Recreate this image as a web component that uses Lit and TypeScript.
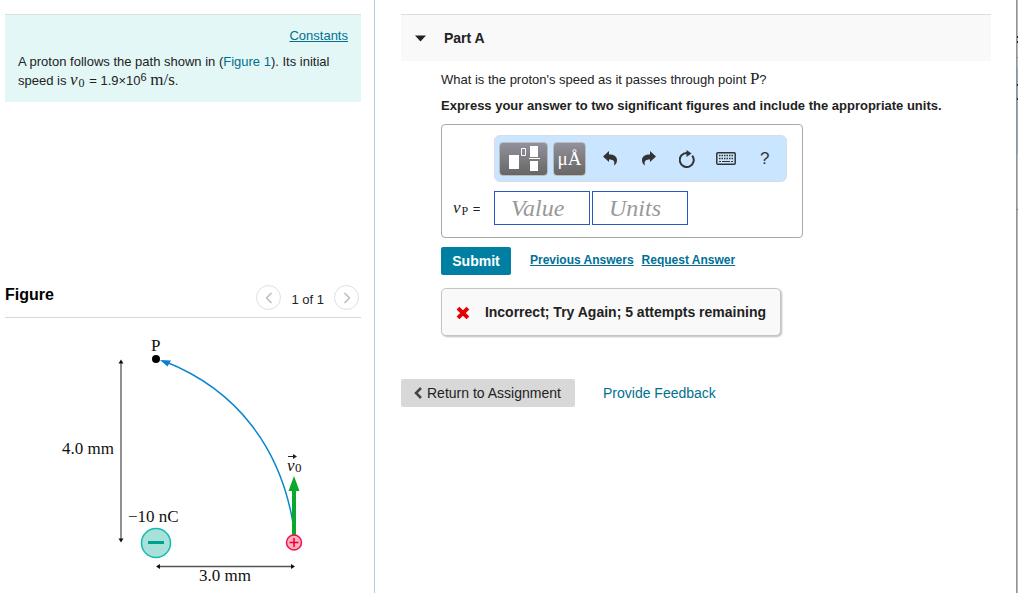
import { LitElement, html, css, svg } from "lit";
import { customElement, state } from "lit/decorators.js";

const FIGURE = svg`
  <g fill="none" stroke="#555" stroke-width="1.300">
    <path d="M116 37V213" />
    <path d="M155 240.500H286" />
  </g>
  <g fill="#111">
    <path d="M116 33.500l2.500 4h-5z" />
    <path d="M116 216.500l2.500 -4h-5z" />
    <path d="M151 240.500l4 -2.500v5z" />
    <path d="M290 240.500l-4 -2.500v5z" />
    <circle cx="151" cy="33" r="4" fill="#000" />
  </g>
  <path d="M160 35.500C232 64 276 122 288.500 200" fill="none" stroke="#0a85d1" stroke-width="1.500" />
  <path d="M155 34l11 0.500l-3.500 6z" fill="#0a7fcf" />
  <path d="M289 210V160" stroke="#0aa82c" stroke-width="4" />
  <path d="M289 150l5.500 15h-11z" fill="#0aa82c" />
  <circle cx="289" cy="216.500" r="7.500" fill="#ffb0b8" stroke="#ee1155" stroke-width="1.500" />
  <path d="M284.500 216.500h9M289 212v9" stroke="#e8003c" stroke-width="1.500" />
  <circle cx="151" cy="217" r="14.500" fill="#a8e0da" stroke="#12bdb0" stroke-width="1.500" />
  <path d="M143 216.500h16" stroke="#00a090" stroke-width="3" />
  <g class="label">
    <text x="146" y="25">P</text>
    <text x="57" y="128">4.0 mm</text>
    <text x="123" y="196">−10 nC</text>
    <text x="194" y="255">3.0 mm</text>
    <text x="282" y="145" font-style="italic">v</text>
    <text class="sub" x="290" y="146">0</text>
  </g>
  <path d="M283 130.500h6" stroke="#222" />
  <path d="M292 130.500l-4 -2.500v5z" fill="#222" />
`;

@customElement("app-root")
export class AppRoot extends LitElement {
  @state() private open = true;

  static styles = css`
    :host {
      display: block;
      font-family: "Liberation Sans", Arial, sans-serif;
      font-size: 13px;
      line-height: 19px;
      color: #222;
      background: #fff;
    }
    * { box-sizing: border-box; }
    button, input { font-family: inherit; margin: 0; }
    button { padding: 0; border: 0; background: none; color: inherit; cursor: pointer; }
    a { color: #00708f; text-decoration: none; }
    p, h2, h3 { margin: 0; }
    svg { display: block; }
    .page {
      display: grid;
      grid-template-columns: 375px minmax(0, 1fr) 2px;
      min-height: 100vh;
    }
    .side {
      display: flex;
      flex-direction: column;
      justify-content: space-between;
      border-right: 1px solid #b4cbe2;
      padding: 14px 13px 0 5px;
    }
    .intro {
      background: #e2f7f6;
      border-top: 1px solid #d6e0df;
      padding: 11px 13px 12px;
    }
    .constants { text-align: right; margin-bottom: 7px; }
    .u { text-decoration: underline; }
    .math { font-family: "Liberation Serif", serif; font-size: 17px; line-height: 1; }
    .it { font-style: italic; }
    sub, sup { line-height: 0; font-size: 11px; }
    sub { vertical-align: -2px; margin: 0 1px; }
    sub.math { font-size: 12px; }
    sup { vertical-align: 4px; }
    .fighead {
      display: flex;
      align-items: center;
      justify-content: space-between;
      height: 40px;
      border-bottom: 1px solid #d8d8d8;
    }
    .fighead h2 { font-size: 16px; color: #000; padding-bottom: 7px; }
    .pager { display: flex; align-items: center; gap: 10px; padding-right: 2px; }
    .count { padding-top: 3px; }
    .round {
      width: 25px;
      height: 25px;
      border: 1px solid #e0e0e0;
      border-radius: 50%;
      display: grid;
      place-items: center;
    }
    .label { font-family: "Liberation Serif", serif; font-size: 17px; fill: #111; }
    .label .sub { font-size: 13px; }
    .main { padding: 14px 25px 0 26px; }
    .part {
      display: flex;
      align-items: center;
      gap: 18px;
      height: 47px;
      padding: 0 14px;
      background: #f9f9f9;
      border-top: 1px solid #ddd;
    }
    .part h2 { font-size: 14px; }
    .body { padding: 9px 0 0 40px; }
    .body .bold { font-weight: bold; margin: 7px 0 9px; }
    .answer {
      width: 362px;
      border: 1px solid #a8a8a8;
      border-radius: 4px;
      padding: 10px 15px 12px 11px;
      display: grid;
      grid-template-columns: 41px 1fr;
      row-gap: 9px;
    }
    .tools {
      grid-column: 2;
      display: flex;
      align-items: center;
      gap: 5px;
      height: 47px;
      padding: 0 2px 0 4px;
      background: #cae5ff;
      border: 1px solid #d8dce4;
      border-radius: 6px;
    }
    .tile {
      height: 34px;
      width: 33px;
      border: 1px solid #bbb;
      border-radius: 4px;
      background: linear-gradient(#92919c, #666);
      display: grid;
      place-items: center;
      color: #fff;
      font-family: "Liberation Serif", serif;
      font-size: 19px;
    }
    .wide { width: 49px; }
    .icons { flex: 1; display: grid; grid-template-columns: repeat(5, 1fr); }
    .icons button { height: 30px; display: grid; place-items: center; font-size: 17px; color: #333; }
    .fields { grid-column: 2; display: flex; gap: 2px; }
    .row { display: contents; }
    .row label { display: flex; align-items: center; white-space: pre; }
    .fields input {
      width: 96px;
      height: 34px;
      border: 1px solid #2a56c6;
      border-radius: 0;
      background: #fff;
      padding: 0 16px;
      font: italic 24px "Liberation Serif", serif;
      color: #222;
    }
    .fields input::placeholder { color: #999; opacity: 1; }
    .actions { display: flex; align-items: center; margin: 9px 0 13px; gap: 8px; font-size: 12px; font-weight: bold; }
    .submit {
      background: #007fa3;
      color: #fff;
      font-size: 14px;
      font-weight: bold;
      width: 70px;
      height: 28px;
      border-radius: 2px;
      margin-right: 11px;
    }
    .actions a { color: #007096; padding-bottom: 2px; }
    .result {
      display: flex;
      align-items: center;
      gap: 15px;
      width: 340px;
      height: 48px;
      padding: 1px 14px 0;
      border: 1px solid #c4c4c4;
      border-radius: 5px;
      background: #f9f9f9;
      box-shadow: 1px 1px 2px #bbb;
      font-size: 14px;
      font-weight: bold;
      white-space: nowrap;
    }
    .foot { display: flex; align-items: center; gap: 28px; margin-top: 43px; font-size: 14px; }
    .return {
      display: flex;
      align-items: center;
      gap: 5px;
      width: 174px;
      height: 28px;
      padding: 0 13px;
      background: #d8d8d8;
      border-radius: 2px;
      font-size: 14px;
      white-space: nowrap;
    }
    .edge {
      border-left: 1px solid #929292;
      background: linear-gradient(
        #b8b8b8 36px, #222 36px 38px, #b8b8b8 38px 41px, #222 41px 43px, #b8b8b8 43px 57px,
        #888 57px 58px, #b8b8b8 58px 68px, #8ba9c4 68px 84px, #222 84px 86px, #8ba9c4 86px 98px,
        #222 98px 100px, #8ba9c4 100px 154px, #b8b8b8 154px 209px, #777 209px 210px, #b8b8b8 210px
      );
    }
  `;

  private toggle() {
    this.open = !this.open;
  }

  render() {
    return html`
      <div class="page">
        <aside class="side">
          <section class="intro">
            <div class="constants"><a class="u" href="#constants">Constants</a></div>
            <p>
              A proton follows the path shown in (<a href="#figure">Figure 1</a>). Its initial speed is
              <span class="math it">v</span><sub class="math">0</sub> = 1.9×10<sup>6</sup>
              <span class="math">m/s</span>.
            </p>
          </section>
          <section id="figure">
            <div class="fighead">
              <h2>Figure</h2>
              <div class="pager">
                <button class="round" aria-label="Previous figure">
                  <svg width="8" height="12" viewBox="0 0 8 12" fill="none" stroke="#bbb" stroke-width="1.500"><path d="M6.500 1L1.500 6l5 5" /></svg>
                </button>
                <span class="count">1 of 1</span>
                <button class="round" aria-label="Next figure">
                  <svg width="8" height="12" viewBox="0 0 8 12" fill="none" stroke="#bbb" stroke-width="1.500"><path d="M1.500 1l5 5l-5 5" /></svg>
                </button>
              </div>
            </div>
            <svg viewBox="0 -8 356 275" role="img" aria-label="Path of the proton">${FIGURE}</svg>
          </section>
        </aside>

        <main class="main">
          <div class="part">
            <button aria-label="Toggle Part A" aria-expanded=${this.open} @click=${this.toggle}>
              <svg width="11" height="7" viewBox="0 0 11 7"><path d="M0 0.500h11L5.500 6.500z" fill="#222" /></svg>
            </button>
            <h2>Part A</h2>
          </div>
          <div class="body" ?hidden=${!this.open}>
            <p>What is the proton's speed as it passes through point <span class="math">P</span>?</p>
            <p class="bold">Express your answer to two significant figures and include the appropriate units.</p>
            <form class="answer" @submit=${(e: Event) => e.preventDefault()}>
              <div class="tools">
                <button type="button" class="tile wide" aria-label="Templates">
                  <svg width="32" height="26" viewBox="0 0 32 26" fill="#fff">
                    <path d="M1 9h10v14H1zM22 0h8v11h-8zM22 15h8v10h-8zM21 12h11v1H21z" />
                    <path d="M13.500 2.500h4v7h-4z" fill="none" stroke="#fff" />
                  </svg>
                </button>
                <button type="button" class="tile" aria-label="Symbols">μÅ</button>
                <div class="icons">
                  <button type="button" aria-label="Undo">
                    <svg width="14" height="15" viewBox="0 0 14 15"><path d="M0 5.500L6 0v3.500c5 0 8 2 8 5.500c0 2.500-1 4.500-3 5.500c1-4 0-6-5-6V11z" fill="#333" /></svg>
                  </button>
                  <button type="button" aria-label="Redo">
                    <svg width="14" height="15" viewBox="0 0 14 15"><path d="M14 5.500L8 0v3.500C3 3.500 0 5.500 0 9c0 2.500 1 4.500 3 5.500c-1-4 0-6 5-6V11z" fill="#333" /></svg>
                  </button>
                  <button type="button" aria-label="Reset">
                    <svg width="16" height="18" viewBox="0 0 16 18" fill="none" stroke="#333" stroke-width="2">
                      <path d="M13.200 5.600A7 7 0 1 1 8 3" /><path d="M7.500 0l5 3.500l-5 3.500z" fill="#333" stroke="none" />
                    </svg>
                  </button>
                  <button type="button" aria-label="Keyboard">
                    <svg width="20" height="13" viewBox="0 0 20 13" fill="none" stroke="#333">
                      <rect x="0.800" y="0.800" width="18.400" height="11.400" rx="1" stroke-width="1.500" />
                      <path d="M3 3.500h14M3 6.500h14" stroke-width="1.500" stroke-dasharray="1.500 1" />
                      <path d="M3 9.500h2M6 9.500h8M15 9.500h2" />
                    </svg>
                  </button>
                  <button type="button" aria-label="Help">?</button>
                </div>
              </div>
              <div class="row">
                <label for="value"><span><span class="math it">v</span><sub class="math">P</sub> =</span></label>
                <div class="fields">
                  <input id="value" placeholder="Value" />
                  <input id="units" placeholder="Units" aria-label="Units" />
                </div>
              </div>
            </form>
            <div class="actions">
              <button class="submit">Submit</button>
              <a class="u" href="#previous">Previous Answers</a>
              <a class="u" href="#request">Request Answer</a>
            </div>
            <div class="result" role="status">
              <svg width="14" height="14" viewBox="0 0 14 14"><path d="M2 2l10 10M12 2l-10 10" stroke="#e60000" stroke-width="4" /></svg>
              Incorrect; Try Again; 5 attempts remaining
            </div>
          </div>
          <div class="foot">
            <button class="return">
              <svg width="8" height="12" viewBox="0 0 8 12" fill="none" stroke="#444" stroke-width="2.500"><path d="M7 1L2 6l5 5" /></svg>
              Return to Assignment
            </button>
            <a href="#feedback">Provide Feedback</a>
          </div>
        </main>
        <div class="edge"></div>
      </div>
    `;
  }
}
